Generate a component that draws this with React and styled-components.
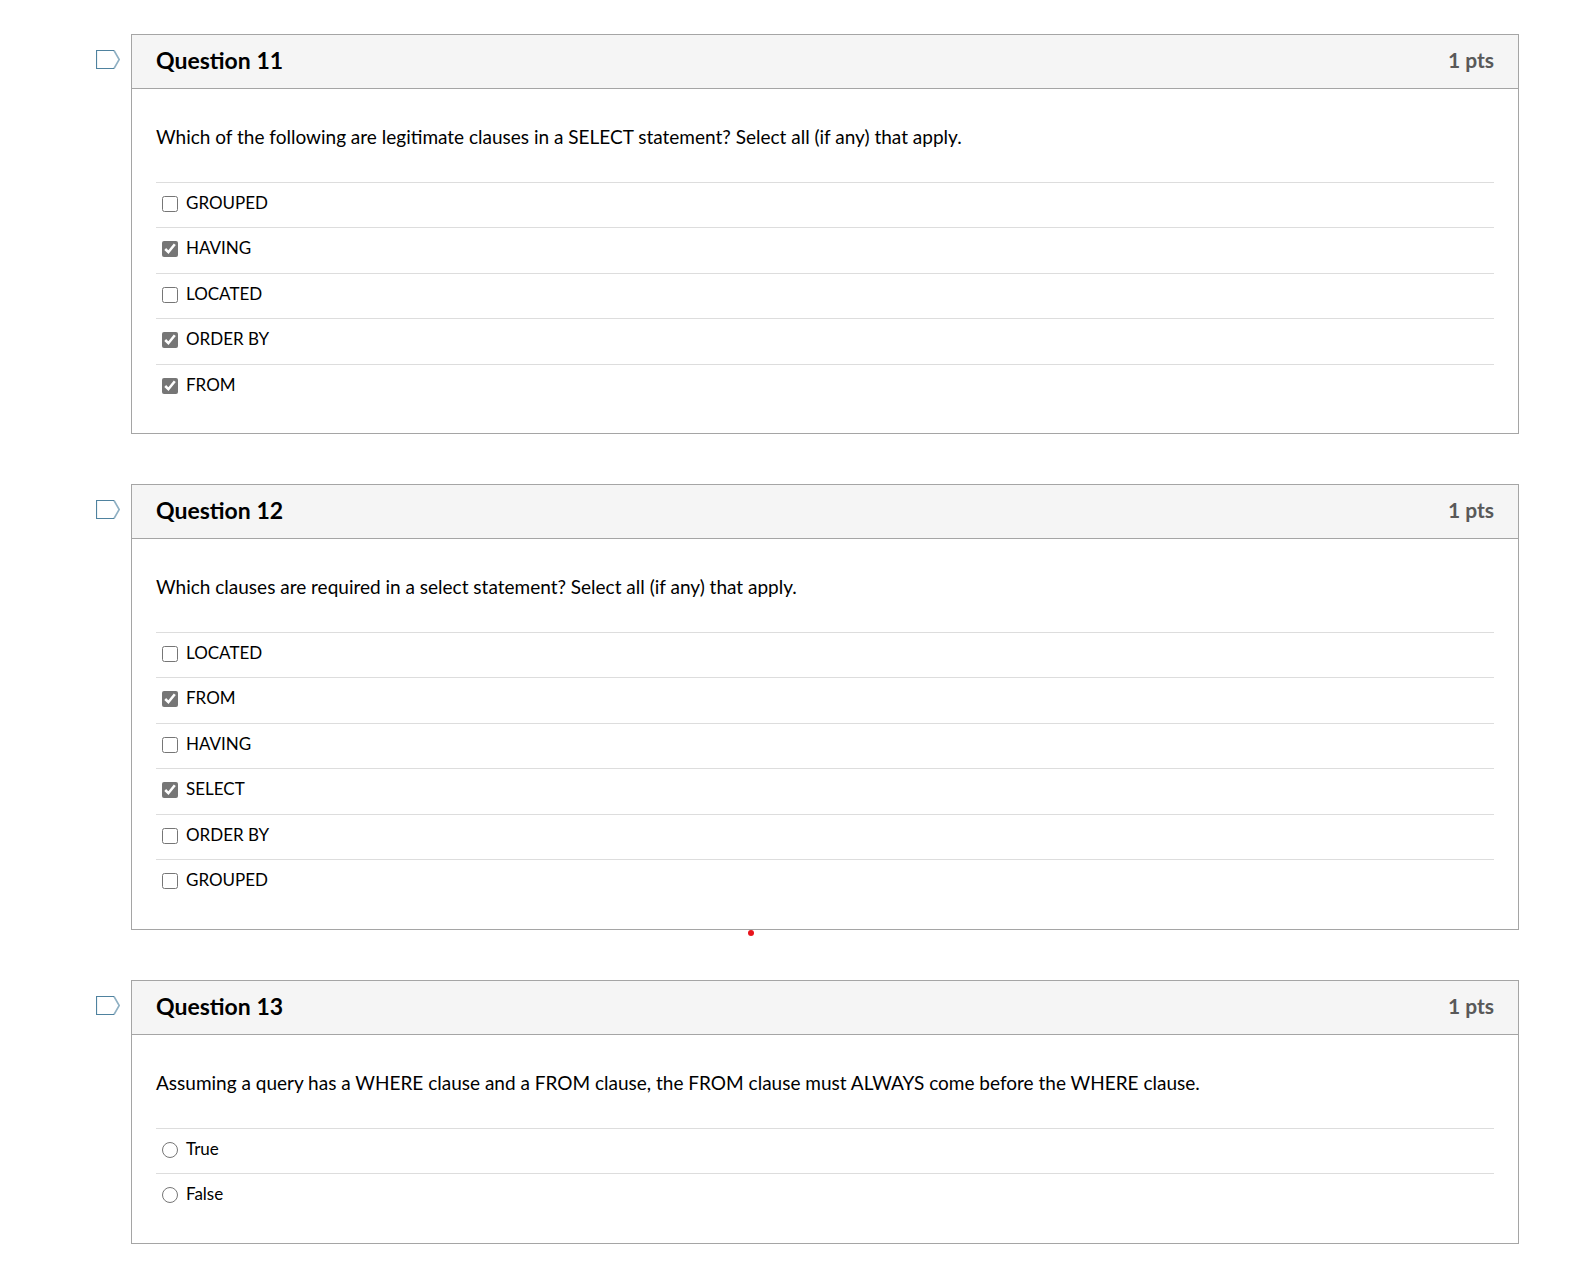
// Packages:
import React, { useState } from "react";
import styled, { createGlobalStyle } from "styled-components";

// Constants:
const COLORS = {
  BORDER: "#a5a5a5",
  DIVIDER: "#dddddd",
  HEADER: "#f5f5f5",
  TEXT: "#000000",
  POINTS: "#595959",
  CONTROL: "#767676",
  MARK: "#e8141c"
};

const QUESTIONS = [
  {
    id: 11,
    type: "checkbox",
    text: "Which of the following are legitimate clauses in a SELECT statement? Select all (if any) that apply.",
    answers: ["GROUPED", "HAVING", "LOCATED", "ORDER BY", "FROM"],
    selected: ["HAVING", "ORDER BY", "FROM"]
  },
  {
    id: 12,
    type: "checkbox",
    text: "Which clauses are required in a select statement? Select all (if any) that apply.",
    answers: ["LOCATED", "FROM", "HAVING", "SELECT", "ORDER BY", "GROUPED"],
    selected: ["FROM", "SELECT"],
    marked: true
  },
  {
    id: 13,
    type: "radio",
    text: "Assuming a query has a WHERE clause and a FROM clause, the FROM clause must ALWAYS come before the WHERE clause.",
    answers: ["True", "False"],
    selected: []
  }
];

// Components:
const Question = ({ question }) => {
  const { id, type, text, answers, marked } = question;
  const [selected, setSelected] = useState(question.selected);
  const [flagged, setFlagged] = useState(false);

  const handleChange = (answer) => {
    if (type === "radio") {
      setSelected([answer]);
    } else if (selected.includes(answer)) {
      setSelected(selected.filter((item) => item !== answer));
    } else {
      setSelected([...selected, answer]);
    }
  };

  return (
    <QuestionRow>
      <FlagButton
        type="button"
        aria-label={`Flag question ${id}`}
        aria-pressed={flagged}
        onClick={() => setFlagged(!flagged)}
      >
        <svg width="24" height="19" viewBox="0 0 24 19">
          <path
            d="M18 0.5 L23.2 9.5 L18 18.5"
            fill={flagged ? "#4f87a5" : "none"}
            stroke="#8fb0c3"
            strokeWidth="1.6"
          />
          <path
            d="M18 0.5 H0.5 V18.5 H18"
            fill={flagged ? "#4f87a5" : "none"}
            stroke="#4f829f"
            strokeWidth="1.2"
          />
        </svg>
      </FlagButton>
      <Card>
        <CardHeader>
          <Title>Question {id}</Title>
          <Points>1 pts</Points>
        </CardHeader>
        <CardBody>
          <QuestionText id={`question-${id}`}>{text}</QuestionText>
          <AnswerList
            role={type === "radio" ? "radiogroup" : "group"}
            aria-labelledby={`question-${id}`}
          >
            {answers.map((answer) => (
              <Answer key={answer}>
                <AnswerInput
                  type={type}
                  name={`question-${id}`}
                  checked={selected.includes(answer)}
                  onChange={() => handleChange(answer)}
                />
                <AnswerText>{answer}</AnswerText>
              </Answer>
            ))}
          </AnswerList>
        </CardBody>
        {marked && <Mark />}
      </Card>
    </QuestionRow>
  );
};

const App = () => {
  return (
    <>
      <GlobalStyle />
      <Page>
        {QUESTIONS.map((question) => (
          <Question key={question.id} question={question} />
        ))}
      </Page>
    </>
  );
};

// Exports:
export default App;

// Styles:
const GlobalStyle = createGlobalStyle`
  * {
    box-sizing: border-box;
  }
  body {
    margin: 0;
    background-color: #ffffff;
    color: ${COLORS.TEXT};
    font-family: Lato, "Liberation Sans", sans-serif;
  }
`;

const Page = styled.main`
  display: flex;
  flex-direction: column;
  gap: 50px;
  padding: 34px 53px 24px 96px;
`;

const QuestionRow = styled.section`
  display: grid;
  grid-template-columns: 24px minmax(0, 1fr);
  column-gap: 11px;
  align-items: start;
`;

const FlagButton = styled.button`
  display: flex;
  margin: 16px 0 0;
  padding: 0;
  border: none;
  background: none;
  cursor: pointer;
`;

const Card = styled.div`
  position: relative;
  border: 1px solid ${COLORS.BORDER};
`;

const CardHeader = styled.header`
  display: flex;
  justify-content: space-between;
  align-items: center;
  padding: 9px 24px 12px;
  background-color: ${COLORS.HEADER};
  border-bottom: 1px solid ${COLORS.BORDER};
`;

const Title = styled.h2`
  margin: 0;
  font-size: 23px;
  line-height: 32px;
  font-weight: 700;
`;

const Points = styled.span`
  color: ${COLORS.POINTS};
  font-size: 21px;
  line-height: 32px;
  font-weight: 700;
`;

const CardBody = styled.div`
  padding: 33px 24px 24px;
`;

const QuestionText = styled.p`
  margin: 0 0 30px;
  font-size: 19px;
  line-height: 30px;
`;

const AnswerList = styled.div`
  display: grid;
  grid-auto-rows: minmax(45px, auto) minmax(46px, auto);
`;

const Answer = styled.label`
  display: flex;
  align-items: flex-start;
  gap: 8px;
  padding: 8px 6px;
  border-top: 1px solid ${COLORS.DIVIDER};
  cursor: pointer;
`;

const AnswerInput = styled.input`
  flex: none;
  width: 16px;
  height: 16px;
  margin: 5px 0 0;
  accent-color: ${COLORS.CONTROL};
`;

const AnswerText = styled.span`
  font-size: 17px;
  line-height: 24px;
`;

const Mark = styled.span`
  position: absolute;
  bottom: -7px;
  left: 616px;
  width: 6px;
  height: 6px;
  border-radius: 50%;
  background-color: ${COLORS.MARK};
`;
